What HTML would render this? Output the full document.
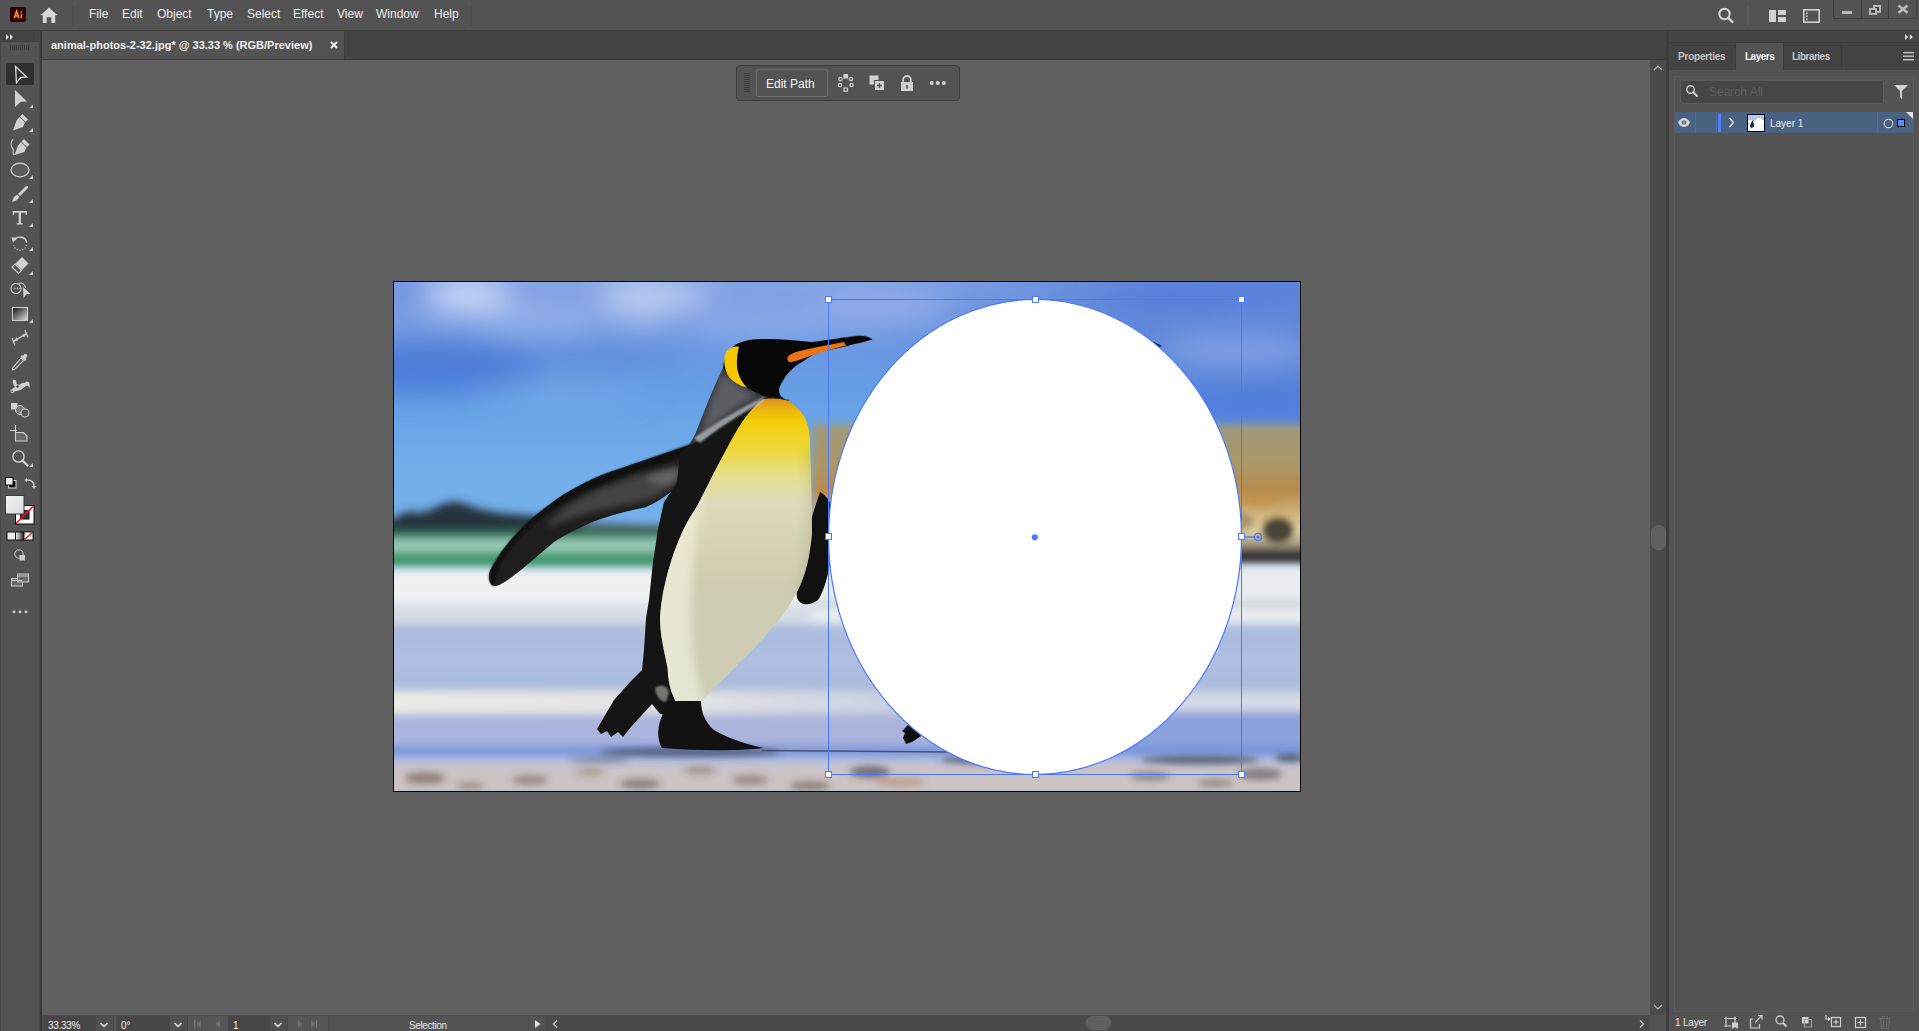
<!DOCTYPE html>
<html><head><meta charset="utf-8">
<style>
*{margin:0;padding:0;box-sizing:border-box}
html,body{width:1919px;height:1031px;overflow:hidden;background:#535353;font-family:"Liberation Sans",sans-serif;color:#e6e6e6}
.a{position:absolute}
.t{position:absolute;white-space:nowrap;line-height:1}
.menu span{position:absolute;top:8px;font-size:12px;line-height:1;color:#ececec}
</style></head><body>
<!-- menu bar -->
<div class="a" style="left:0;top:0;width:1919px;height:30px;background:#535353"></div>
<div class="a" style="left:0;top:30px;width:1919px;height:1px;background:#3c3c3c"></div>
<div class="a" style="left:10px;top:7px;width:16px;height:15px;background:#330000;border-radius:2px"></div>
<svg class="a" style="left:10px;top:7px" width="16" height="15" viewBox="0 0 16 15">
<path d="M4.3 11.3 L6.6 4.2 L8.9 11.3 M5.2 8.9 L8 8.9" fill="none" stroke="#ff9a00" stroke-width="1.5"/>
<rect x="10.6" y="6.8" width="1.5" height="4.5" fill="#ff9a00"/><rect x="10.6" y="4.2" width="1.5" height="1.5" fill="#ff9a00"/>
</svg>
<svg class="a" style="left:40px;top:7px" width="18" height="17" viewBox="0 0 18 17"><path d="M9 0.5 L17.5 8.3 L15.2 8.3 L15.2 16 L11.3 16 L11.3 10.2 L6.7 10.2 L6.7 16 L2.8 16 L2.8 8.3 L0.5 8.3 Z" fill="#d6d6d6"/></svg>
<div class="a" style="left:72px;top:5px;width:2px;height:20px;background:#4a4a4a"></div>
<div class="menu">
<span style="left:89px">File</span>
<span style="left:122px">Edit</span>
<span style="left:157px">Object</span>
<span style="left:207px">Type</span>
<span style="left:247px">Select</span>
<span style="left:293px">Effect</span>
<span style="left:337px">View</span>
<span style="left:376px">Window</span>
<span style="left:434px">Help</span>
</div>
<div class="a" style="left:470px;top:5px;width:2px;height:20px;background:#4a4a4a"></div>
<!-- right top icons -->
<svg class="a" style="left:1716px;top:6px" width="20" height="18" viewBox="0 0 20 18">
<circle cx="8.5" cy="8" r="5.2" fill="none" stroke="#d6d6d6" stroke-width="2"/>
<line x1="12.3" y1="11.8" x2="16.5" y2="16" stroke="#d6d6d6" stroke-width="2.4" stroke-linecap="round"/>
</svg>
<div class="a" style="left:1747px;top:5px;width:2px;height:20px;background:#5c5c5c"></div>
<svg class="a" style="left:1769px;top:10px" width="18" height="12" viewBox="0 0 18 12">
<rect x="0" y="0" width="7" height="12" fill="#d0d0d0"/><rect x="9" y="0" width="8" height="5" fill="#d0d0d0"/><rect x="9" y="7" width="8" height="5" fill="#d0d0d0"/>
</svg>
<svg class="a" style="left:1803px;top:9px" width="18" height="14" viewBox="0 0 18 14">
<rect x="0.8" y="0.8" width="15.4" height="12.4" fill="none" stroke="#d0d0d0" stroke-width="1.6"/>
<rect x="3" y="3.5" width="1.6" height="1.6" fill="#d0d0d0"/><rect x="3" y="6.5" width="1.6" height="1.6" fill="#d0d0d0"/><rect x="3" y="9.5" width="1.6" height="1.6" fill="#d0d0d0"/>
</svg>
<div class="a" style="left:1833px;top:0;width:84px;height:19px;background:#545454;border:1px solid #3e3e3e;border-top:none;border-radius:0 0 3px 3px"></div>
<div class="a" style="left:1861px;top:0;width:1px;height:18px;background:#3e3e3e"></div>
<div class="a" style="left:1888px;top:0;width:1px;height:18px;background:#3e3e3e"></div>
<div class="a" style="left:1842px;top:11px;width:10px;height:3px;background:#b8b8b8"></div>
<svg class="a" style="left:1868px;top:4px" width="14" height="12" viewBox="1868 4 14 12">
<rect x="1874" y="6" width="6" height="5.8" fill="#3e3e3e" stroke="#b8b8b8" stroke-width="2"/>
<rect x="1870" y="9" width="6" height="4.8" fill="#3e3e3e" stroke="#b8b8b8" stroke-width="2"/>
</svg>
<svg class="a" style="left:1896px;top:3px" width="14" height="12" viewBox="1896 3 14 12">
<path d="M1898.5 5.5 L1907.5 12.8 M1907.5 5.5 L1898.5 12.8" stroke="#b8b8b8" stroke-width="2.6"/>
</svg>
<!-- left toolbar -->
<div class="a" style="left:0;top:31px;width:42px;height:1000px;background:#535353"></div>
<div class="a" style="left:0;top:31px;width:1px;height:1000px;background:#484848"></div>
<div class="a" style="left:0;top:31px;width:40px;height:11px;background:#434343"></div>
<div class="a" style="left:39px;top:31px;width:1px;height:1000px;background:#4a4a4a"></div><div class="a" style="left:40px;top:31px;width:2px;height:1000px;background:#3a3a3a"></div>
<svg class="a" style="left:6px;top:34px" width="8" height="6" viewBox="0 0 8 6" fill="#d8d8d8"><path d="M0 0 L3 3 L0 6 Z M4 0 L7 3 L4 6 Z"/></svg>
<svg class="a" style="left:10px;top:45px" width="20" height="5" viewBox="0 0 20 5" fill="#3a3a3a">
<rect x="0" y="0" width="1" height="5"/><rect x="2" y="0" width="1" height="5"/><rect x="4" y="0" width="1" height="5"/><rect x="6" y="0" width="1" height="5"/><rect x="8" y="0" width="1" height="5"/><rect x="10" y="0" width="1" height="5"/><rect x="12" y="0" width="1" height="5"/><rect x="14" y="0" width="1" height="5"/><rect x="16" y="0" width="1" height="5"/><rect x="18" y="0" width="1" height="5"/>
</svg>
<div class="a" style="left:6px;top:63px;width:28px;height:22px;background:#2f2f2f;border-radius:2px"></div>
<svg class="a" style="left:0;top:55px" width="42" height="580" viewBox="0 55 42 580">
<g fill="#d0d0d0">
<!-- sel arrow outline -->
<path d="M15.5 66.5 L26.5 77 L21 77.3 L16.5 82.5 Z" fill="none" stroke="#d8d8d8" stroke-width="1.3"/>
<!-- direct selection -->
<path d="M15 90 L27 101.5 L21 101.8 L15 107 Z"/>
<path d="M33 104.5 L33 108 L29.5 108 Z"/>
<!-- pen -->
<path d="M22.5 114 L28 119.5 L25.5 122 L20 116.5 Z"/>
<path d="M19.5 117 L25 122.5 L23 127 L13 130.5 L16.5 120.5 Z"/>
<path d="M33 128 L33 132 L29 132 Z"/>
<!-- curvature -->
<path d="M24 139 L29.5 144.5 L27 147 L21.5 141.5 Z"/>
<path d="M21 142 L26.5 147.5 L24.5 152 L14.5 155 L18 145.5 Z"/>
<path d="M13 139 C10 143 11 147 13 149 C14 151 12 153 14 155" fill="none" stroke="#d0d0d0" stroke-width="1.1"/>
<!-- ellipse -->
<ellipse cx="20" cy="170" rx="9" ry="6.8" fill="#5c5c5c" stroke="#d0d0d0" stroke-width="1.2"/>
<path d="M33 175 L33 179 L29 179 Z"/>
<!-- brush -->
<path d="M27.5 186 C28.5 186.5 28.5 187.5 27.5 188.5 L20 196 L18 194 L25.5 186.5 C26.2 185.8 27 185.7 27.5 186 Z"/>
<path d="M17.5 194.8 L19.3 196.6 C18.5 199.5 16 201.5 12 201.7 C13 198.5 14.5 195.5 17.5 194.8 Z"/>
<path d="M33 199 L33 203 L29 203 Z"/>
<!-- type -->
<path d="M12.7 211 L27 211 L27 215 L25.8 215 L25.3 212.8 L21 212.8 L21 223 L23 223.5 L23 224.6 L16.7 224.6 L16.7 223.5 L18.7 223 L18.7 212.8 L14.4 212.8 L13.9 215 L12.7 215 Z"/>
<path d="M33 223 L33 227 L29 227 Z"/>
<!-- rotate -->
<path d="M14.2 240.5 A6.8 6.8 0 0 1 26.8 243" fill="none" stroke="#d0d0d0" stroke-width="1.4"/>
<path d="M26.6 245 A6.8 6.8 0 0 1 13.5 245.5" fill="none" stroke="#d0d0d0" stroke-width="1.3" stroke-dasharray="1.1 1.7"/>
<path d="M11.5 237.5 L17.5 237.5 L13 242.5 Z"/>
<path d="M33 247 L33 251 L29 251 Z"/>
<!-- eraser -->
<path d="M22 257 L28.5 263.5 L22 270 L15.5 263.5 Z"/>
<path d="M15 264 L21.5 270.5 L18.5 273.5 L12 267 Z" fill="none" stroke="#d0d0d0" stroke-width="1.1"/>
<path d="M33 271 L33 275 L29 275 Z"/>
<!-- shape builder -->
<circle cx="16" cy="288.5" r="5" fill="none" stroke="#d0d0d0" stroke-width="1.1"/>
<path d="M18.5 283.5 A5 5 0 0 1 25.5 288" fill="none" stroke="#d0d0d0" stroke-width="1.1"/>
<path d="M23 287 L30.5 294 L26.5 294.2 L23.5 298 Z"/>
<circle cx="15" cy="288.3" r="0.75"/><circle cx="17.5" cy="288.3" r="0.75"/><circle cx="20" cy="288.3" r="0.75"/>
<!-- gradient -->
</g>
<defs><linearGradient id="tg" x1="0" y1="0" x2="1" y2="1"><stop offset="0" stop-color="#111"/><stop offset="1" stop-color="#ddd"/></linearGradient></defs>
<rect x="12.5" y="307.5" width="15" height="13" fill="url(#tg)" stroke="#d0d0d0" stroke-width="1"/>
<g fill="#d0d0d0">
<path d="M33 319 L33 323 L29 323 Z"/>
<!-- measure -->
<path d="M13.5 341.5 L26.5 333.5" stroke="#d0d0d0" stroke-width="1.4"/>
<path d="M12 338 L15 345.5 M25 330 L28 337.5" stroke="#d0d0d0" stroke-width="1.2"/>
<path d="M13.5 341.5 L16.5 337.2 L18 340.3 Z M26.5 333.5 L22 334.7 L24 337.5 Z"/>
<!-- eyedropper -->
<path d="M24.5 354 C26 353 28 355 27 357 L25.5 358.5 L26.5 359.5 L25 361 L20.5 356.5 L22 355 L23 356 Z"/>
<path d="M21 358 L23.5 360.5 L15.5 368.5 C14.5 369.8 12.5 370 12.5 370 C12.5 370 12.3 368 13.5 367 Z" fill="none" stroke="#d0d0d0" stroke-width="1.1"/>
<!-- puppet warp -->
<path d="M13 380 C15 379 17 381 16.5 383.5 L18 386 C20 384 23 382 25 383 C26 381 29 381 29.5 384 L30 388 L27.5 385.5 C25 386 23 389 20 390 C18 391 15 391 13 392 L12 389 L15 387 C14 385 12 383 13 380 Z"/>
<circle cx="17.5" cy="386.5" r="1.8" fill="#535353" stroke="#d0d0d0" stroke-width="0.9"/>
<rect x="11" y="390" width="2.5" height="2.5" fill="none" stroke="#d0d0d0" stroke-width="0.8"/>
<!-- shapes -->
<rect x="11" y="403" width="6.5" height="6.5"/>
<circle cx="20" cy="410" r="4.5" fill="#7a7a7a" stroke="#d0d0d0" stroke-width="1"/>
<circle cx="25" cy="413" r="4" fill="#535353" stroke="#d0d0d0" stroke-width="1.1"/>
<!-- artboard -->
<path d="M10 430.5 L17 430.5 M15.5 425 L15.5 432" stroke="#d0d0d0" stroke-width="1.1"/>
<path d="M15.5 432.5 L23.5 432.5 L27 436 L27 441 L15.5 441 Z" fill="#6a6a6a" stroke="#d0d0d0" stroke-width="1.1"/>
<!-- zoom -->
<circle cx="18.5" cy="456.5" r="5.6" fill="none" stroke="#d0d0d0" stroke-width="1.4"/>
<path d="M22.5 460.5 L27.5 465.5" stroke="#d0d0d0" stroke-width="2.4" stroke-linecap="round"/>
<path d="M33 463 L33 467 L29 467 Z"/>
<!-- default fill/stroke -->
<rect x="8.5" y="480.5" width="7.5" height="7.5" fill="#111" stroke="#e0e0e0" stroke-width="1"/>
<rect x="5.5" y="477.5" width="7.5" height="7.5" fill="#f0f0f0" stroke="#111" stroke-width="1"/>
<!-- swap -->
<path d="M27 480 C31 480 34 482 34 486" fill="none" stroke="#c8c8c8" stroke-width="1.5"/>
<path d="M27 477.5 L27 482.5 L24.5 480 Z M31.5 486 L36.5 486 L34 489 Z" fill="#c8c8c8"/>
</g>
<!-- stroke none -->
<rect x="15.5" y="505.5" width="18.5" height="18.5" fill="#ffffff" stroke="#111" stroke-width="1"/>
<rect x="20.5" y="510.5" width="8.5" height="8.5" fill="#333" stroke="#111" stroke-width="1"/>
<path d="M16 523.5 L33.5 506" stroke="#ff1111" stroke-width="1.6"/>
<!-- fill -->
<defs><linearGradient id="fg" x1="0" y1="0" x2="1" y2="1"><stop offset="0" stop-color="#f4f4f4"/><stop offset="1" stop-color="#dcdcdc"/></linearGradient></defs>
<rect x="5.5" y="495.5" width="18.5" height="18.5" fill="url(#fg)" stroke="#3a3a3a" stroke-width="1"/>
<!-- color modes -->
<rect x="6.5" y="531.5" width="27" height="9" fill="#151515"/>
<rect x="7.5" y="532.5" width="7.5" height="7" fill="#e8e8e8"/>
<defs><linearGradient id="mg" x1="0" y1="0" x2="1" y2="0"><stop offset="0" stop-color="#eee"/><stop offset="1" stop-color="#222"/></linearGradient></defs>
<rect x="16" y="532.5" width="7.5" height="7" fill="url(#mg)"/>
<rect x="24.5" y="532.5" width="8" height="7" fill="#fff"/>
<path d="M24.8 539.3 L32.3 532.7" stroke="#ff1111" stroke-width="1.4"/>
<!-- draw modes -->
<circle cx="19" cy="554" r="4.2" fill="none" stroke="#c8c8c8" stroke-width="1"/>
<rect x="19.5" y="555" width="5.5" height="5.5" fill="#c8c8c8"/>
<!-- screen mode -->
<rect x="11.5" y="578.5" width="11" height="7.5" fill="#6a6a6a" stroke="#c8c8c8" stroke-width="1"/>
<rect x="17.5" y="574" width="11" height="8" fill="#6a6a6a" stroke="#c8c8c8" stroke-width="1"/>
<path d="M11.5 580.5 L22.5 580.5 M17.5 576 L28.5 576" stroke="#c8c8c8" stroke-width="1"/>
<!-- more -->
<g fill="#c8c8c8"><circle cx="14" cy="612" r="1.4"/><circle cx="20" cy="612" r="1.4"/><circle cx="26" cy="612" r="1.4"/></g>
</svg>
<!-- tab bar -->
<div class="a" style="left:42px;top:31px;width:1624px;height:28px;background:#434343"></div>
<div class="a" style="left:42px;top:31px;width:302px;height:28px;background:#535353"></div><div class="a" style="left:344px;top:31px;width:1px;height:28px;background:#3c3c3c"></div>
<div class="t" style="left:51px;top:40px;font-size:11px;font-weight:bold;color:#f0f0f0">animal-photos-2-32.jpg* @ 33.33 % (RGB/Preview)</div>
<svg class="a" style="left:330px;top:41px" width="8" height="8" viewBox="0 0 8 8"><path d="M1 1 L7 7 M7 1 L1 7" stroke="#f0f0f0" stroke-width="2"/></svg>
<div class="a" style="left:42px;top:59px;width:1624px;height:1px;background:#3a3a3a"></div>
<!-- canvas -->
<div class="a" style="left:42px;top:60px;width:1608px;height:955px;background:#606060"></div>
<div class="a" style="left:1650px;top:60px;width:16px;height:955px;background:#4b4b4b"></div>
<svg class="a" style="left:1652px;top:64px" width="12" height="8" viewBox="0 0 12 8"><path d="M2 6 L6 2 L10 6" fill="none" stroke="#b4b4b4" stroke-width="1.2"/></svg>
<svg class="a" style="left:1652px;top:1003px" width="12" height="8" viewBox="0 0 12 8"><path d="M2 2 L6 6 L10 2" fill="none" stroke="#b4b4b4" stroke-width="1.2"/></svg>
<div class="a" style="left:1651px;top:525px;width:15px;height:25px;background:#5f5f5f;border:1px solid #666;border-radius:7px"></div>
<div class="a" style="left:1666px;top:31px;width:3px;height:1000px;background:#3c3c3c"></div>
<!-- photo -->
<div class="a" style="left:393px;top:281px;width:908px;height:511px;background:#0a0a0a"></div>
<svg class="a" style="left:394px;top:282px" width="906" height="509" viewBox="394 282 906 509">
<defs>
<linearGradient id="sky" x1="0" y1="282" x2="0" y2="520" gradientUnits="userSpaceOnUse">
<stop offset="0" stop-color="#88a8e8"/>
<stop offset="0.12" stop-color="#7ea0e4"/>
<stop offset="0.3" stop-color="#6a98e2"/>
<stop offset="0.45" stop-color="#669ee6"/>
<stop offset="0.6" stop-color="#6aa6e8"/>
<stop offset="0.8" stop-color="#72aeea"/>
<stop offset="1" stop-color="#74b0ea"/>
</linearGradient>
<linearGradient id="skyR" x1="860" y1="0" x2="1300" y2="0" gradientUnits="userSpaceOnUse">
<stop offset="0" stop-color="#5a86dc" stop-opacity="0"/>
<stop offset="0.5" stop-color="#5a84da" stop-opacity="0.7"/>
<stop offset="1" stop-color="#5680da" stop-opacity="0.85"/>
</linearGradient>
<filter id="b14" x="-50%" y="-100%" width="200%" height="300%"><feGaussianBlur stdDeviation="14"/></filter>
<filter id="b8" x="-30%" y="-80%" width="160%" height="260%"><feGaussianBlur stdDeviation="8"/></filter>
<filter id="b4" x="-20%" y="-50%" width="140%" height="200%"><feGaussianBlur stdDeviation="4"/></filter>
<filter id="b3" x="-20%" y="-50%" width="140%" height="200%"><feGaussianBlur stdDeviation="3"/></filter>
<filter id="b2" x="-20%" y="-50%" width="140%" height="200%"><feGaussianBlur stdDeviation="2"/></filter>
<filter id="b1" x="-20%" y="-50%" width="140%" height="200%"><feGaussianBlur stdDeviation="1"/></filter>
<linearGradient id="belly" x1="0" y1="398" x2="0" y2="716" gradientUnits="userSpaceOnUse">
<stop offset="0" stop-color="#d88a18"/>
<stop offset="0.03" stop-color="#eab010"/>
<stop offset="0.07" stop-color="#f2cc08"/>
<stop offset="0.16" stop-color="#eed838"/>
<stop offset="0.25" stop-color="#e6e090"/>
<stop offset="0.33" stop-color="#e2e0c0"/>
<stop offset="1" stop-color="#dcdcc8"/>
</linearGradient>
<linearGradient id="bellyShade" x1="662" y1="0" x2="814" y2="0" gradientUnits="userSpaceOnUse">
<stop offset="0" stop-color="#f8f8ec" stop-opacity="0.55"/>
<stop offset="0.35" stop-color="#f0f0e0" stop-opacity="0.15"/>
<stop offset="0.6" stop-color="#a8a688" stop-opacity="0.15"/>
<stop offset="1" stop-color="#8a8668" stop-opacity="0.32"/>
</linearGradient>
<clipPath id="bellyClip"><path d="M764 399 C775 398 783 399 789 401 C797 407 803 413 806 420 C809 428 810 436 810 445 C811 470 812 505 812 533 C810 556 806 574 798 590 C790 606 781 618 770 630 C760 642 751 652 741 661 C730 672 720 683 710 692 C704 698 700 703 697 707 C690 714 684 718 679 719 C677 712 675 705 675 700 C670 690 668 680 667.6 668 C664 650 660 635 660 618 C661 600 665 580 671.5 560 C678 540 686 522 696 508 C704 494 710 480 716 469 C726 450 736 430 745 418 C751 410 757 403 764 399 Z"/></clipPath>
</defs>
<rect x="394" y="282" width="906" height="509" fill="url(#sky)"/>
<rect x="394" y="282" width="906" height="240" fill="url(#skyR)"/>
<!-- clouds -->
<g filter="url(#b14)">
<ellipse cx="690" cy="300" rx="260" ry="22" fill="#7a9ae2" opacity="0.5"/>
<ellipse cx="405" cy="290" rx="30" ry="16" fill="#5a86dc" opacity="0.6"/>
<ellipse cx="468" cy="296" rx="42" ry="16" fill="#d4e0f8" opacity="0.9"/>
<ellipse cx="640" cy="300" rx="40" ry="26" fill="#c0d0f2" opacity="0.5"/>
<ellipse cx="540" cy="318" rx="60" ry="14" fill="#a8c0f0" opacity="0.6"/>
<ellipse cx="655" cy="296" rx="55" ry="14" fill="#c4d4f4" opacity="0.8"/>
<ellipse cx="760" cy="325" rx="70" ry="12" fill="#a0b8ee" opacity="0.55"/>
<ellipse cx="880" cy="308" rx="70" ry="14" fill="#a8bcee" opacity="0.55"/>
<ellipse cx="430" cy="368" rx="110" ry="26" fill="#3e6cd2" opacity="0.65"/>
<ellipse cx="600" cy="360" rx="80" ry="14" fill="#5584d8" opacity="0.5"/>
<ellipse cx="560" cy="395" rx="90" ry="10" fill="#88b4ea" opacity="0.4"/>
<ellipse cx="1240" cy="350" rx="80" ry="16" fill="#94ace6" opacity="0.7"/>
<ellipse cx="1250" cy="300" rx="60" ry="10" fill="#8aa4e4" opacity="0.5"/>
<ellipse cx="1200" cy="295" rx="110" ry="14" fill="#4e78d8" opacity="0.7"/>
<ellipse cx="1240" cy="400" rx="80" ry="14" fill="#4a78d8" opacity="0.7"/>
</g>
<!-- land right -->
<defs><linearGradient id="land" x1="0" y1="420" x2="0" y2="566" gradientUnits="userSpaceOnUse">
<stop offset="0" stop-color="#8a94b0" stop-opacity="0"/>
<stop offset="0.05" stop-color="#a09a7c"/>
<stop offset="0.3" stop-color="#aa9868"/>
<stop offset="0.48" stop-color="#b88a4c"/>
<stop offset="0.62" stop-color="#ccac72"/>
<stop offset="0.76" stop-color="#e0d0a0"/>
<stop offset="0.85" stop-color="#a89c84"/>
<stop offset="0.92" stop-color="#2e2e2e"/>
<stop offset="1" stop-color="#3a3a3a"/>
</linearGradient></defs>
<g filter="url(#b3)">
<rect x="812" y="420" width="520" height="146" fill="url(#land)"/>
<ellipse cx="1278" cy="530" rx="16" ry="13" fill="#4a4438"/>
<ellipse cx="1240" cy="522" rx="14" ry="8" fill="#9a8a60" opacity="0.8"/>
<ellipse cx="1262" cy="500" rx="20" ry="7" fill="#c09048" opacity="0.7"/>
</g>
<!-- left mountains and green water -->
<g filter="url(#b4)">
<path d="M370 524 L394 519 C400 514 408 510 416 512 C424 514 430 510 438 506 C446 502 456 500 466 504 C474 508 484 510 494 512 C505 514 520 514 540 517 L600 523 L700 528 L834 534 L834 540 L370 540 Z" fill="#26303e"/>
<path d="M580 522 L700 527 L834 533 L834 540 L580 540 Z" fill="#7a8aa0" opacity="0.6"/>
</g>
<g filter="url(#b4)">
<rect x="370" y="529" width="464" height="40" fill="#4a9a76"/>
<rect x="370" y="529" width="464" height="9" fill="#2e6a50" opacity="0.9"/>
<rect x="370" y="539" width="464" height="13" fill="#a4d2c4" opacity="0.85"/>
<rect x="370" y="553" width="464" height="13" fill="#3c9668" opacity="0.95"/>
</g>
<!-- surf & water -->
<defs>
<linearGradient id="surf2" x1="394" y1="0" x2="900" y2="0" gradientUnits="userSpaceOnUse">
<stop offset="0" stop-color="#eceae4"/><stop offset="0.6" stop-color="#e2e2e2"/><stop offset="1" stop-color="#c8d0e4"/>
</linearGradient>
</defs>
<g filter="url(#b4)">
<rect x="370" y="568" width="464" height="58" fill="#eef0f2"/>
<rect x="370" y="604" width="464" height="20" fill="#d2d9e4" opacity="0.85"/>
<rect x="812" y="564" width="520" height="72" fill="#e8ecf0"/>
<rect x="812" y="600" width="520" height="8" fill="#c0c6cc" opacity="0.6"/>
<rect x="370" y="624" width="960" height="68" fill="#acbcde"/>
<rect x="370" y="650" width="960" height="20" fill="#b0c0e2" opacity="0.6"/>
<rect x="370" y="691" width="960" height="23" fill="url(#surf2)"/>
<rect x="1000" y="694" width="330" height="16" fill="#d6dae6"/>
<rect x="370" y="714" width="960" height="33" fill="#aab4dc"/>
<rect x="1120" y="712" width="210" height="42" fill="#8ca0dc"/>
<rect x="370" y="746" width="960" height="11" fill="#7494dc"/>
<rect x="370" y="757" width="960" height="8" fill="#b8c2de"/>
<rect x="370" y="765" width="960" height="30" fill="#ccc2c2"/>
</g>
<g filter="url(#b3)">
<ellipse cx="690" cy="752" rx="90" ry="5" fill="#4a5268" opacity="0.75"/>
<ellipse cx="1000" cy="760" rx="60" ry="4" fill="#404858" opacity="0.8"/>
<ellipse cx="1200" cy="760" rx="60" ry="4" fill="#404858" opacity="0.8"/>
<ellipse cx="1290" cy="758" rx="15" ry="4" fill="#404858" opacity="0.8"/>
<ellipse cx="425" cy="778" rx="20" ry="6" fill="#6a5a52" opacity="0.6"/>
<ellipse cx="470" cy="786" rx="14" ry="4" fill="#7a6a62" opacity="0.5"/>
<ellipse cx="530" cy="780" rx="18" ry="5" fill="#6a5a52" opacity="0.5"/>
<ellipse cx="590" cy="772" rx="14" ry="4" fill="#8a7a6a" opacity="0.5"/>
<ellipse cx="640" cy="784" rx="20" ry="5" fill="#5a4a42" opacity="0.55"/>
<ellipse cx="700" cy="770" rx="16" ry="4" fill="#7a6a5a" opacity="0.5"/>
<ellipse cx="750" cy="780" rx="18" ry="5" fill="#6a5a52" opacity="0.5"/>
<ellipse cx="810" cy="786" rx="20" ry="5" fill="#5a4a42" opacity="0.5"/>
<ellipse cx="600" cy="760" rx="30" ry="3" fill="#505870" opacity="0.5"/>
<ellipse cx="870" cy="772" rx="20" ry="6" fill="#3a3840" opacity="0.6"/>
<ellipse cx="900" cy="782" rx="25" ry="4" fill="#b08060" opacity="0.5"/>
<ellipse cx="1150" cy="776" rx="20" ry="5" fill="#605860" opacity="0.5"/>
<ellipse cx="1260" cy="774" rx="22" ry="6" fill="#5a5058" opacity="0.6"/>
<ellipse cx="1215" cy="783" rx="18" ry="4" fill="#6a5a52" opacity="0.5"/>
</g>
<path d="M762 750.5 L950 752" stroke="#303440" stroke-width="1.5" opacity="0.7"/>
<!-- penguin -->
<!-- right flipper -->
<path d="M820 492 C812 515 805 540 801 564 C798 578 796 590 797 598 C800 606 810 606 818 600 C825 590 830 570 831 550 L831 505 C828 498 824 494 820 492 Z" fill="#111111"/>
<!-- wing -->
<path d="M702 438 C698 440 694 443 689 445 C675 450 660 455 645 460 C628 466 610 471 595 478 C580 485 566 492 554 501 C542 510 530 519 521 529 C510 540 502 550 496.5 560 C492 566 489 571 489 576 C489 582 491 586 495 586 C500 586 508 580 521 570 C532 561 543 551 554 542 C568 533 581 527 595 521 C603 518 610 516 617 514 C627 511 637 509 645 507.5 C651 505 656 502 661 499 C667 495 672 491 678 486 L700 466 Z" fill="#1e1e1e"/>
<path d="M700 440 C675 450 645 460 595 478 C566 492 540 510 521 529 C505 546 492 562 489 576 C489 582 491 586 495 586 C494 575 500 562 512 546 C528 526 552 508 580 494 C620 476 660 464 700 452 Z" fill="#0c0c0c" opacity="0.8" filter="url(#b1)"/>
<path d="M682 466 C668 468 650 472 632 477 C612 484 592 492 576 501 C562 509 552 518 545 528 C560 522 580 515 600 510 C620 506 638 503 650 499 C664 494 676 484 682 474 Z" fill="#4e4e4e" opacity="0.8" filter="url(#b3)"/>
<path d="M680 468 C668 470 654 474 644 478 C652 484 664 486 676 482 Z" fill="#7a7a7a" opacity="0.6" filter="url(#b3)"/>
<!-- back black band + leg -->
<path d="M790 400 L764 396 L700 440 L680 452 L677 483 L664 502 L658 529 L653 562 L649 600 L646 618 L644 650 L642 670 L630 682 L614 700 L597 729 L601 734 L607 731 L611 737 L618 732 L623 737 L630 728 L641 716 L652 704 L660 714 L678 714 L668 669 L660 618 L672 560 L696 508 L716 469 L745 418 Z" fill="#151515"/>
<!-- belly -->
<path d="M764 399 C775 398 783 399 789 401 C797 407 803 413 806 420 C809 428 810 436 810 445 C811 470 812 505 812 533 C810 556 806 574 798 590 C790 606 781 618 770 630 C760 642 751 652 741 661 C730 672 720 683 710 692 C704 698 700 703 697 707 C690 714 684 718 679 719 C677 712 675 705 675 700 C670 690 668 680 667.6 668 C664 650 660 635 660 618 C661 600 665 580 671.5 560 C678 540 686 522 696 508 C704 494 710 480 716 469 C726 450 736 430 745 418 C751 410 757 403 764 399 Z" fill="url(#belly)"/>
<g clip-path="url(#bellyClip)">
<defs><linearGradient id="shadeV" x1="0" y1="470" x2="0" y2="580" gradientUnits="userSpaceOnUse"><stop offset="0" stop-color="#9c9878" stop-opacity="0"/><stop offset="1" stop-color="#9c9878" stop-opacity="1"/></linearGradient>
<filter id="b5w" x="-50%" y="-50%" width="200%" height="200%"><feGaussianBlur stdDeviation="5"/></filter></defs>
<path d="M716 440 C700 500 690 560 692 620 C694 660 700 690 708 708 L770 700 L830 580 L830 440 Z" fill="url(#shadeV)" opacity="0.24" filter="url(#b5w)"/>
<path d="M804 450 L830 450 L830 640 L788 640 C798 600 806 540 808 490 Z" fill="#8a8668" opacity="0.2" filter="url(#b5w)"/>
<path d="M704 490 C692 550 686 610 690 650 C694 685 700 698 708 708 L660 725 L650 600 L668 520 Z" fill="#f8f6ee" opacity="0.35" filter="url(#b5w)"/>
</g>
<!-- neck -->
<path d="M723 368 C727 376 735 382 745 387 C752 391 757 394 764 397 L702 440 L689 445 C692 440 694 437 695.5 433.6 C703 415 712 390 723 368 Z" fill="#34383c"/>
<path d="M694 438 C712 425 740 408 766 396 L762 403 C738 415 716 430 700 443 Z" fill="#c4c8cc" opacity="0.7" filter="url(#b1)"/>
<path d="M722 372 C730 380 742 388 756 396 C738 406 716 420 700 436 C706 415 714 392 722 372 Z" fill="#8a8e94" opacity="0.45" filter="url(#b3)"/>
<!-- front foot -->
<path d="M666 701 L701 701 C701 712 705 722 714 730 C728 738 745 744 764 748 C740 751 700 751 662 748 C656 738 658 725 662 716 Z" fill="#121212"/>
<path d="M655 688 C660 684 667 685 669 692 L666 702 C660 701 656 696 655 688 Z" fill="#b8b8b0" opacity="0.6" filter="url(#b1)"/>
<!-- head -->
<path d="M723 368 C724 358 728 350 735 345 C742 341 750 339.5 760 339 C778 338.5 795 340 812 342 C830 340 845 337 855 336 C863 335 869 336 872.5 339.5 C866 341.5 855 344 843 347 C835 349 828 350 819.6 352 C812 355 808 358 804 360.7 C800 363 796 365 793 368.4 C789 372 786 375 784 379 C781 384 779 387 779 390 C779 393 780 395 781 396.4 C783 398 785 399 787 399.5 L762 396 C756 393 750 390 745 387 C735 382 727 376 723 368 Z" fill="#080808"/>
<path d="M726.5 351 C729 348 734 346 739 346.5 C737 355 736 365 738 372 C740 379 743 384 747 387.5 C740 386 733 382 729 377 C725 371 724 364 724.5 358 C725 355 725.5 353 726.5 351 Z" fill="#f6c800"/>
<path d="M787.5 358 C789 354 795 352 804 350 C818 347 830 344.5 844 342 L846 345.5 C832 349 818 353 806 357.5 C798 360.5 793 362 790 362 C788 362 787 360 787.5 358 Z" fill="#ec7418"/>
<path d="M845 338 C852 336 860 335 866 336" stroke="#606468" stroke-width="1" opacity="0.6" fill="none"/>
<!-- other penguin bits -->
<path d="M1150 340 L1162 346 L1156 348 Z" fill="#101010"/>
<path d="M908 725 C914 728 918 732 921 736 L912 742 L906 744 L903 738 L905 733 L902 731 Z" fill="#101010"/>
</svg>
<!-- selection -->
<svg class="a" style="left:0;top:0" width="1919" height="1031" viewBox="0 0 1919 1031">
<ellipse cx="1035" cy="537" rx="206.5" ry="237.5" fill="#ffffff" stroke="#4a78fa" stroke-width="1.2"/>
<rect x="828.5" y="299.5" width="413" height="475" fill="none" stroke="#4a78fa" stroke-width="1"/>
<g fill="#ffffff" stroke="#4a78fa" stroke-width="1">
<rect x="825.5" y="296.5" width="6" height="6"/>
<rect x="1032.5" y="296.5" width="6" height="6"/>
<rect x="1238.5" y="296.5" width="6" height="6"/>
<rect x="825.5" y="533.5" width="6" height="6"/>
<rect x="1238.5" y="533.5" width="6" height="6"/>
<rect x="825.5" y="771.5" width="6" height="6"/>
<rect x="1032.5" y="771.5" width="6" height="6"/>
<rect x="1238.5" y="771.5" width="6" height="6"/>
</g>
<line x1="1244.5" y1="537" x2="1254" y2="537" stroke="#4a78fa" stroke-width="1.2"/>
<circle cx="1258" cy="537" r="3.6" fill="none" stroke="#4a78fa" stroke-width="1.4"/>
<circle cx="1258" cy="537" r="1.6" fill="#4a78fa"/>
<circle cx="1034.8" cy="537.3" r="3" fill="#4a78fa"/>
</svg>
<!-- control bar -->
<div class="a" style="left:736px;top:65px;width:224px;height:36px;background:#535353;border:1px solid #3e3e3e;border-radius:4px"></div>
<svg class="a" style="left:744px;top:73px" width="6" height="20" viewBox="0 0 6 20">
<g fill="#3c3c3c"><rect x="0" y="0" width="6" height="1"/><rect x="0" y="2" width="6" height="1"/><rect x="0" y="4" width="6" height="1"/><rect x="0" y="6" width="6" height="1"/><rect x="0" y="8" width="6" height="1"/><rect x="0" y="10" width="6" height="1"/><rect x="0" y="12" width="6" height="1"/><rect x="0" y="14" width="6" height="1"/><rect x="0" y="16" width="6" height="1"/><rect x="0" y="18" width="6" height="1"/></g>
</svg>
<div class="a" style="left:756px;top:69px;width:72px;height:28px;border:1px solid #6e6e6e;border-radius:2px"></div>
<div class="t" style="left:766px;top:78px;font-size:12px;color:#f2f2f2">Edit Path</div>
<svg class="a" style="left:837px;top:74px" width="18" height="18" viewBox="0 0 18 18" fill="none" stroke="#cfcfcf" stroke-width="1.2">
<rect x="7" y="0.5" width="3.5" height="3.5" fill="#cfcfcf"/>
<circle cx="3.5" cy="5" r="1.7"/><circle cx="14" cy="5" r="1.7"/>
<circle cx="3" cy="11" r="1.7"/><circle cx="14.5" cy="11" r="1.7"/>
<rect x="7" y="14" width="3.5" height="3.2"/>
</svg>
<svg class="a" style="left:869px;top:75px" width="16" height="16" viewBox="0 0 16 16">
<rect x="0.5" y="0.5" width="9" height="9" fill="#cfcfcf"/>
<rect x="5" y="5" width="10" height="10" fill="#535353"/>
<rect x="6" y="6" width="9" height="9" fill="#cfcfcf"/>
<path d="M10.5 8 L10.5 13 M8 10.5 L13 10.5" stroke="#535353" stroke-width="1.3"/>
</svg>
<svg class="a" style="left:900px;top:75px" width="14" height="17" viewBox="0 0 14 17">
<path d="M3.2 7 L3.2 4.8 A3.8 3.8 0 0 1 10.8 4.8 L10.8 7" fill="none" stroke="#cfcfcf" stroke-width="1.8"/>
<rect x="1" y="7" width="12" height="9" fill="#cfcfcf"/>
<rect x="6.2" y="10" width="1.6" height="3.5" fill="#535353"/>
</svg>
<svg class="a" style="left:929px;top:80px" width="18" height="6" viewBox="0 0 18 6" fill="#cfcfcf">
<circle cx="2.7" cy="3" r="2"/><circle cx="8.8" cy="3" r="2"/><circle cx="14.9" cy="3" r="2"/>
</svg>
<!-- status bar -->
<div class="a" style="left:42px;top:1015px;width:1608px;height:16px;background:#4a4a4a"></div>
<div class="a" style="left:45px;top:1016px;width:51px;height:15px;background:#464646"></div>
<div class="t" style="left:48px;top:1021px;font-size:10px;color:#f0f0f0;letter-spacing:-0.3px">33.33%</div>
<div class="a" style="left:96px;top:1016px;width:17px;height:15px;background:#505050"></div>
<svg class="a" style="left:99px;top:1021px" width="10" height="8" viewBox="0 0 10 8"><path d="M1.5 2 L5 5.5 L8.5 2" fill="none" stroke="#e8e8e8" stroke-width="1.4"/></svg>
<div class="a" style="left:114px;top:1016px;width:2px;height:15px;background:#5a5a5a"></div>
<div class="a" style="left:118px;top:1016px;width:51px;height:15px;background:#464646"></div>
<div class="t" style="left:121px;top:1021px;font-size:10px;color:#f0f0f0">0°</div>
<div class="a" style="left:170px;top:1016px;width:17px;height:15px;background:#505050"></div>
<svg class="a" style="left:173px;top:1021px" width="10" height="8" viewBox="0 0 10 8"><path d="M1.5 2 L5 5.5 L8.5 2" fill="none" stroke="#e8e8e8" stroke-width="1.4"/></svg>
<div class="a" style="left:188px;top:1016px;width:40px;height:15px;background:#555555"></div>
<svg class="a" style="left:194px;top:1019px" width="30" height="10" viewBox="0 0 30 10" fill="#707070"><rect x="0" y="1" width="1.5" height="8"/><path d="M7 1 L2.5 5 L7 9 Z"/><path d="M26 1 L21.5 5 L26 9 Z"/></svg>
<div class="a" style="left:229px;top:1016px;width:40px;height:15px;background:#464646"></div>
<div class="t" style="left:233px;top:1021px;font-size:10px;color:#f0f0f0">1</div>
<div class="a" style="left:270px;top:1016px;width:17px;height:15px;background:#505050"></div>
<svg class="a" style="left:273px;top:1021px" width="10" height="8" viewBox="0 0 10 8"><path d="M1.5 2 L5 5.5 L8.5 2" fill="none" stroke="#e8e8e8" stroke-width="1.4"/></svg>
<div class="a" style="left:288px;top:1016px;width:40px;height:15px;background:#555555"></div>
<svg class="a" style="left:295px;top:1019px" width="30" height="10" viewBox="0 0 30 10" fill="#707070"><path d="M3 1 L7.5 5 L3 9 Z"/><path d="M16 1 L20.5 5 L16 9 Z"/><rect x="21" y="1" width="1.5" height="8"/></svg>
<div class="a" style="left:330px;top:1016px;width:198px;height:15px;background:#535353"></div>
<div class="t" style="left:409px;top:1021px;font-size:10px;color:#e8e8e8;letter-spacing:-0.4px">Selection</div>
<div class="a" style="left:529px;top:1016px;width:17px;height:15px;background:#535353"></div>
<svg class="a" style="left:534px;top:1019px" width="8" height="10" viewBox="0 0 8 10"><path d="M1 1 L6.5 5 L1 9 Z" fill="#e0e0e0"/></svg>
<svg class="a" style="left:551px;top:1019px" width="8" height="10" viewBox="0 0 8 10"><path d="M6 1.5 L2.5 5 L6 8.5" fill="none" stroke="#c8c8c8" stroke-width="1.3"/></svg>
<div class="a" style="left:1086px;top:1016px;width:25px;height:14px;background:#5f5f5f;border:1px solid #666;border-radius:7px"></div>
<svg class="a" style="left:1638px;top:1019px" width="8" height="10" viewBox="0 0 8 10"><path d="M2 1.5 L5.5 5 L2 8.5" fill="none" stroke="#c8c8c8" stroke-width="1.3"/></svg>
<div class="a" style="left:1650px;top:1015px;width:16px;height:16px;background:#535353"></div>
<!-- right panel -->
<div class="a" style="left:1669px;top:31px;width:250px;height:1000px;background:#535353"></div>
<div class="a" style="left:1669px;top:31px;width:250px;height:12px;background:#454545"></div>
<div class="a" style="left:1669px;top:43px;width:250px;height:27px;background:#434343"></div>
<div class="a" style="left:1669px;top:42px;width:250px;height:1px;background:#3c3c3c"></div>
<svg class="a" style="left:1905px;top:34px" width="9" height="6" viewBox="0 0 9 6" fill="#d8d8d8"><path d="M0 0 L3.2 3 L0 6 Z M4.8 0 L8 3 L4.8 6 Z"/></svg>
<div class="a" style="left:1735px;top:43px;width:1px;height:27px;background:#3c3c3c"></div>
<div class="a" style="left:1736px;top:43px;width:47px;height:27px;background:#535353"></div>
<div class="a" style="left:1783px;top:43px;width:1px;height:27px;background:#3c3c3c"></div>
<div class="a" style="left:1841px;top:43px;width:1px;height:27px;background:#3c3c3c"></div>
<div class="t" style="left:1678px;top:52px;font-size:10px;font-weight:bold;color:#c4c4c4;letter-spacing:-0.2px">Properties</div>
<div class="t" style="left:1745px;top:52px;font-size:10px;font-weight:bold;color:#f4f4f4;letter-spacing:-0.5px">Layers</div>
<div class="t" style="left:1792px;top:52px;font-size:10px;font-weight:bold;color:#c4c4c4;letter-spacing:-0.5px">Libraries</div>
<svg class="a" style="left:1903px;top:52px" width="11" height="9" viewBox="0 0 11 9" fill="#cfcfcf"><rect x="0" y="0" width="11" height="1.3"/><rect x="0" y="3.5" width="11" height="1.3"/><rect x="0" y="7" width="11" height="1.3"/></svg>
<!-- inner box -->
<div class="a" style="left:1674px;top:76px;width:240px;height:936px;border:1px solid #5c5c5c"></div>
<div class="a" style="left:1680px;top:80px;width:204px;height:24px;background:#464646;border:1px solid #5a5a5a;border-radius:3px"></div>
<svg class="a" style="left:1685px;top:84px" width="14" height="14" viewBox="0 0 14 14">
<circle cx="5.5" cy="5.5" r="3.8" fill="none" stroke="#d0d0d0" stroke-width="1.4"/>
<path d="M8.3 8.3 L12 12" stroke="#d0d0d0" stroke-width="2" stroke-linecap="round"/>
</svg>
<div class="t" style="left:1709px;top:86px;font-size:12px;color:#5e5e5e">Search All</div>
<svg class="a" style="left:1894px;top:85px" width="14" height="15" viewBox="0 0 14 15" fill="#d0d0d0"><path d="M0 0 L14 0 L8 6 L8 14.5 L6 12 L6 6 Z"/></svg>
<!-- layer row -->
<div class="a" style="left:1675px;top:112px;width:238px;height:21px;background:#4a6281"></div>
<div class="a" style="left:1695px;top:112px;width:1px;height:21px;background:#566d8a"></div>
<div class="a" style="left:1716px;top:112px;width:1px;height:21px;background:#566d8a"></div>
<div class="a" style="left:1877px;top:112px;width:1px;height:21px;background:#566d8a"></div>
<svg class="a" style="left:1677px;top:117px" width="14" height="11" viewBox="0 0 14 11">
<path d="M1 5.5 C3 2 5 1 7 1 C9 1 11 2 13 5.5 C11 9 9 10 7 10 C5 10 3 9 1 5.5 Z" fill="#d8d8d8"/>
<circle cx="7" cy="5.5" r="2.3" fill="#4a6281"/><path d="M7 3.5 L7 7.5" stroke="#d8d8d8" stroke-width="0.9"/>
</svg>
<div class="a" style="left:1718px;top:114px;width:3px;height:18px;background:#4f7dff"></div>
<svg class="a" style="left:1728px;top:117px" width="7" height="11" viewBox="0 0 7 11"><path d="M1.5 1 L5.5 5.5 L1.5 10" fill="none" stroke="#eeeeee" stroke-width="1.3"/></svg>
<div class="a" style="left:1747px;top:114px;width:18px;height:18px;background:#000"></div>
<svg class="a" style="left:1748px;top:115px" width="16" height="16" viewBox="0 0 16 16">
<rect width="16" height="16" fill="#f2f4f8"/><rect width="16" height="5" fill="#b4c8ee"/>
<rect y="8" width="16" height="3" fill="#d8e4f2"/>
<ellipse cx="11" cy="8" rx="4" ry="5" fill="#ffffff"/>
<path d="M2 11 L4 6 L6 5 L6 12 L3 13 Z" fill="#222"/>
<path d="M5 6 L6 5.5 L6 11 Z" fill="#e8d070"/>
</svg>
<div class="t" style="left:1770px;top:119px;font-size:10px;color:#f0f0f0">Layer 1</div>
<svg class="a" style="left:1883px;top:118px" width="11" height="11" viewBox="0 0 11 11"><circle cx="5.5" cy="5.5" r="4.3" fill="none" stroke="#d8d8d8" stroke-width="1.1"/></svg>
<div class="a" style="left:1897px;top:119px;width:8px;height:8px;background:#000"></div>
<div class="a" style="left:1898px;top:120px;width:6px;height:6px;background:#5b8cff"></div>
<svg class="a" style="left:1906px;top:112px" width="7" height="7" viewBox="0 0 7 7"><path d="M0 0 L7 0 L7 7 Z" fill="#e0e0e0"/></svg>
<!-- bottom -->
<div class="t" style="left:1675px;top:1018px;font-size:10px;color:#e8e8e8;letter-spacing:-0.2px">1 Layer</div>
<svg class="a" style="left:1724px;top:1014px" width="170" height="16" viewBox="1724 1014 170 16" fill="none" stroke="#d0d0d0" stroke-width="1.2">
<!-- artboard bookmark -->
<path d="M1726 1016.5 L1726 1027 M1735 1016.5 L1735 1023 M1724 1018.5 L1737 1018.5 M1724 1026 L1731 1026"/>
<path d="M1732 1022.5 L1738 1022.5 L1738 1029 L1735 1027 L1732 1029 Z" fill="#d0d0d0" stroke="none"/>
<!-- export -->
<path d="M1753 1019 L1750.5 1019 L1750.5 1028 L1759.5 1028 L1759.5 1024"/>
<path d="M1755 1022.5 L1762 1015.5 M1758 1015.5 L1762 1015.5 L1762 1019.5"/>
<!-- locate -->
<circle cx="1780" cy="1020" r="4" stroke-width="1.3"/><path d="M1783 1023 L1786.5 1026.5" stroke-width="2"/>
<!-- clip -->
<rect x="1802" y="1017" width="6.5" height="6.5" fill="#d0d0d0" stroke="none"/>
<path d="M1804.5 1019.5 L1811.5 1019.5 L1811.5 1027 L1804.5 1027 Z" stroke="#9a9a9a"/>
<!-- sublayer -->
<path d="M1826 1015 L1826 1019 L1829 1019" /><path d="M1828 1017.5 L1830 1019 L1828 1020.5" fill="#d0d0d0"/>
<rect x="1831.5" y="1017.5" width="9" height="9"/><path d="M1836 1019.5 L1836 1024.5 M1833.5 1022 L1838.5 1022"/>
<!-- new layer -->
<rect x="1855.5" y="1017.5" width="10" height="10"/><path d="M1860.5 1019.5 L1860.5 1025.5 M1857.5 1022.5 L1863.5 1022.5"/>
<!-- trash -->
<g stroke="#6a6a6a"><path d="M1879 1018.5 L1891 1018.5 M1882.5 1018.5 L1882.5 1016.5 L1887.5 1016.5 L1887.5 1018.5"/><path d="M1880.5 1019 L1881.5 1028.5 L1888.5 1028.5 L1889.5 1019"/><path d="M1883.5 1020.5 L1883.5 1027 M1886.5 1020.5 L1886.5 1027"/></g>
</svg>

</body></html>
